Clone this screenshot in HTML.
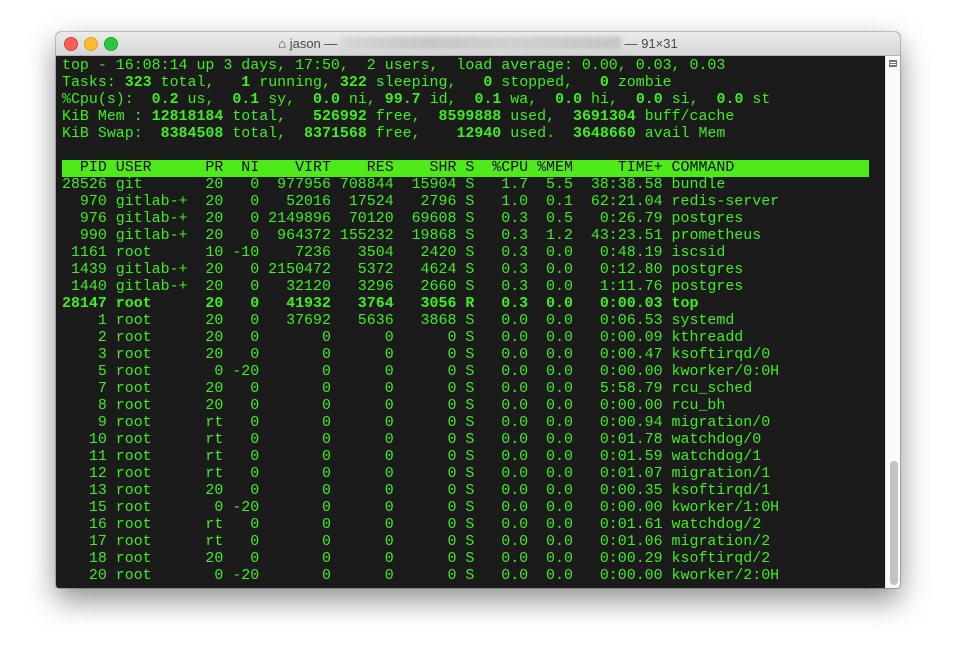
<!DOCTYPE html>
<html><head><meta charset="utf-8"><style>
html,body{margin:0;padding:0;width:956px;height:668px;background:#fff;overflow:hidden}
.win{position:absolute;left:56px;top:32px;width:844px;height:556px;border-radius:5px 5px 3px 3px;background:#1b1b1b;box-shadow:0 12px 30px rgba(0,0,0,.45),0 0 0 1px rgba(0,0,0,.2);overflow:hidden}
.tb{position:absolute;left:0;top:0;width:844px;height:23px;background:linear-gradient(#ebebeb,#d5d5d5);border-bottom:1px solid #b4b4b4}
.dot{position:absolute;top:5px;width:12px;height:12px;border-radius:50%}
.title{position:absolute;left:0;right:0;top:4px;text-align:center;font:13px "Liberation Sans",sans-serif;color:#4a4a4a}
.blur{display:inline-block;width:280px;height:12px;vertical-align:-1px;background:linear-gradient(90deg,#d6d6d6,#c6c6c6 30%,#cfcfcf 60%,#c4c4c4);filter:blur(2px)}
.sb{position:absolute;left:829px;top:24px;width:15px;height:532px;background:#fafafa;border-left:1px solid #e4e4e4}
.thumb{position:absolute;left:4px;top:405px;width:8px;height:124px;border-radius:4px;background:#c2c2c2}
pre{position:absolute;left:6px;top:25.5px;margin:0;font:14.95px/17px "Liberation Mono",monospace;color:#3fee1c;white-space:pre}
b{font-weight:bold}
.hd{background:#4eea1a;color:#0a0a0a;display:inline-block}
</style></head><body>
<div class="win">
<div class="tb">
<div class="dot" style="left:8px;background:#fc5f57;border:0.5px solid #de3f38"></div>
<div class="dot" style="left:28px;background:#fdbc2e;border:0.5px solid #dd9f20"></div>
<div class="dot" style="left:48px;background:#28c840;border:0.5px solid #1aab2a"></div>
<div class="title">⌂ jason — <span class="blur"></span> — 91×31</div>
</div>
<pre>top - 16:08:14 up 3 days, 17:50,  2 users,  load average: 0.00, 0.03, 0.03
Tasks: <b>323</b> total,   <b>1</b> running, <b>322</b> sleeping,   <b>0</b> stopped,   <b>0</b> zombie
%Cpu(s):  <b>0.2</b> us,  <b>0.1</b> sy,  <b>0.0</b> ni, <b>99.7</b> id,  <b>0.1</b> wa,  <b>0.0</b> hi,  <b>0.0</b> si,  <b>0.0</b> st
KiB Mem : <b>12818184</b> total,   <b>526992</b> free,  <b>8599888</b> used,  <b>3691304</b> buff/cache
KiB Swap:  <b>8384508</b> total,  <b>8371568</b> free,    <b>12940</b> used.  <b>3648660</b> avail Mem

<span class="hd">  PID USER      PR  NI    VIRT    RES    SHR S  %CPU %MEM     TIME+ COMMAND               </span>
28526 git       20   0  977956 708844  15904 S   1.7  5.5  38:38.58 bundle
  970 gitlab-+  20   0   52016  17524   2796 S   1.0  0.1  62:21.04 redis-server
  976 gitlab-+  20   0 2149896  70120  69608 S   0.3  0.5   0:26.79 postgres
  990 gitlab-+  20   0  964372 155232  19868 S   0.3  1.2  43:23.51 prometheus
 1161 root      10 -10    7236   3504   2420 S   0.3  0.0   0:48.19 iscsid
 1439 gitlab-+  20   0 2150472   5372   4624 S   0.3  0.0   0:12.80 postgres
 1440 gitlab-+  20   0   32120   3296   2660 S   0.3  0.0   1:11.76 postgres
<b>28147 root      20   0   41932   3764   3056 R   0.3  0.0   0:00.03 top</b>
    1 root      20   0   37692   5636   3868 S   0.0  0.0   0:06.53 systemd
    2 root      20   0       0      0      0 S   0.0  0.0   0:00.09 kthreadd
    3 root      20   0       0      0      0 S   0.0  0.0   0:00.47 ksoftirqd/0
    5 root       0 -20       0      0      0 S   0.0  0.0   0:00.00 kworker/0:0H
    7 root      20   0       0      0      0 S   0.0  0.0   5:58.79 rcu_sched
    8 root      20   0       0      0      0 S   0.0  0.0   0:00.00 rcu_bh
    9 root      rt   0       0      0      0 S   0.0  0.0   0:00.94 migration/0
   10 root      rt   0       0      0      0 S   0.0  0.0   0:01.78 watchdog/0
   11 root      rt   0       0      0      0 S   0.0  0.0   0:01.59 watchdog/1
   12 root      rt   0       0      0      0 S   0.0  0.0   0:01.07 migration/1
   13 root      20   0       0      0      0 S   0.0  0.0   0:00.35 ksoftirqd/1
   15 root       0 -20       0      0      0 S   0.0  0.0   0:00.00 kworker/1:0H
   16 root      rt   0       0      0      0 S   0.0  0.0   0:01.61 watchdog/2
   17 root      rt   0       0      0      0 S   0.0  0.0   0:01.06 migration/2
   18 root      20   0       0      0      0 S   0.0  0.0   0:00.29 ksoftirqd/2
   20 root       0 -20       0      0      0 S   0.0  0.0   0:00.00 kworker/2:0H</pre>
<div class="sb"><div style="position:absolute;left:3px;top:4px;width:8px;height:7px;border:1px solid #777;box-sizing:border-box;background:repeating-linear-gradient(#777 0 1px,#fff 1px 2px)"></div><div class="thumb"></div></div>
</div>
</body></html>
